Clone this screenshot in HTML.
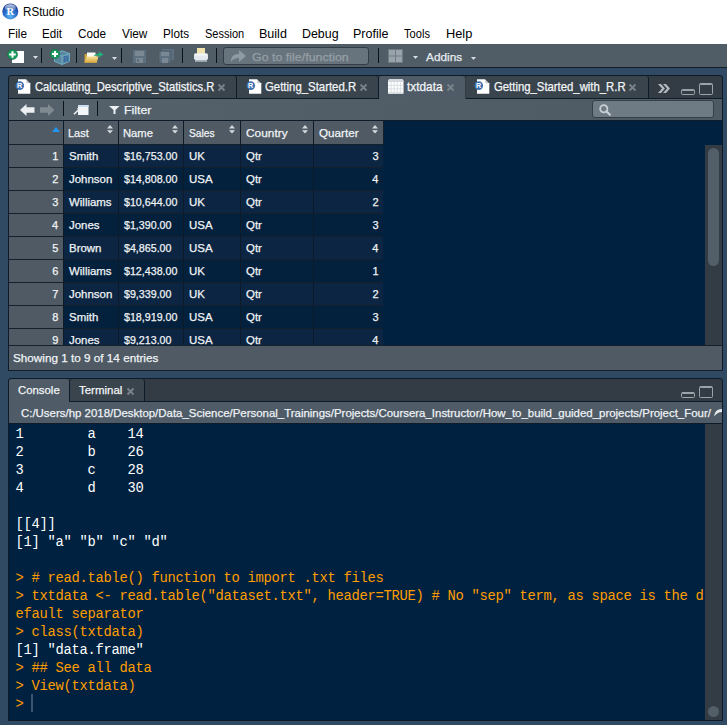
<!DOCTYPE html>
<html><head><meta charset="utf-8"><style>
html,body{margin:0;padding:0}
body{width:727px;height:725px;overflow:hidden;position:relative;background:#314a63;font-family:"Liberation Sans", sans-serif}
.r{position:absolute;box-sizing:border-box}
.t{position:absolute;white-space:pre;line-height:1;font-family:"Liberation Sans", sans-serif;-webkit-text-stroke:0.25px currentColor}
.m{position:absolute;white-space:pre;line-height:1;font-family:"Liberation Mono", monospace;font-size:13.8px;letter-spacing:-0.28px}
.clip{position:absolute;overflow:hidden}
svg.r{overflow:visible}
</style></head><body>
<div class="r" style="left:0px;top:0px;width:727px;height:44px;background:#ffffff;"></div><svg class="r" style="left:1.5px;top:2.5px" width="17" height="17" viewBox="0 0 17 17"><defs><radialGradient id="lg" cx="50%" cy="80%" r="70%"><stop offset="0" stop-color="#5fb6f0"/><stop offset="0.55" stop-color="#2b6fcf"/><stop offset="1" stop-color="#1b3f96"/></radialGradient><linearGradient id="hl" x1="0" y1="0" x2="0" y2="1"><stop offset="0" stop-color="#fff" stop-opacity="0.75"/><stop offset="1" stop-color="#fff" stop-opacity="0"/></linearGradient></defs><circle cx="8.3" cy="8.4" r="8" fill="url(#lg)"/><ellipse cx="8.3" cy="5" rx="5.5" ry="3.8" fill="url(#hl)"/><text x="8.4" y="11.6" text-anchor="middle" font-family="Liberation Serif" font-weight="bold" font-size="10.5" fill="#fff">R</text></svg><div class="t" style="left:22.67px;top:6px;font-size:12.5px;color:#000;transform:scaleX(0.9293);transform-origin:0 0;-webkit-text-stroke:0">RStudio</div><div class="t" style="left:7.66px;top:29px;font-size:11.9px;color:#000;transform:scaleX(0.9903);transform-origin:0 0;-webkit-text-stroke:0">File</div><div class="t" style="left:41.67px;top:29px;font-size:11.9px;color:#000;transform:scaleX(0.9765);transform-origin:0 0;-webkit-text-stroke:0">Edit</div><div class="t" style="left:78.11px;top:29px;font-size:11.9px;color:#000;transform:scaleX(0.9886);transform-origin:0 0;-webkit-text-stroke:0">Code</div><div class="t" style="left:121.74px;top:29px;font-size:11.9px;color:#000;transform:scaleX(0.9912);transform-origin:0 0;-webkit-text-stroke:0">View</div><div class="t" style="left:162.66px;top:29px;font-size:11.9px;color:#000;transform:scaleX(0.9877);transform-origin:0 0;-webkit-text-stroke:0">Plots</div><div class="t" style="left:204.90px;top:29px;font-size:11.9px;color:#000;transform:scaleX(0.9245);transform-origin:0 0;-webkit-text-stroke:0">Session</div><div class="t" style="left:259.30px;top:29px;font-size:11.9px;color:#000;transform:scaleX(1.0545);transform-origin:0 0;-webkit-text-stroke:0">Build</div><div class="t" style="left:302.01px;top:29px;font-size:11.9px;color:#000;transform:scaleX(1.0444);transform-origin:0 0;-webkit-text-stroke:0">Debug</div><div class="t" style="left:353.00px;top:29px;font-size:11.9px;color:#000;transform:scaleX(1.0543);transform-origin:0 0;-webkit-text-stroke:0">Profile</div><div class="t" style="left:404.22px;top:29px;font-size:11.9px;color:#000;transform:scaleX(0.9345);transform-origin:0 0;-webkit-text-stroke:0">Tools</div><div class="t" style="left:445.77px;top:29px;font-size:11.9px;color:#000;transform:scaleX(1.0770);transform-origin:0 0;-webkit-text-stroke:0">Help</div><div class="r" style="left:0px;top:44px;width:727px;height:23px;background:#505c66;"></div><div class="r" style="left:0px;top:67px;width:727px;height:1px;background:#131e28;"></div><div class="r" style="left:41px;top:48px;width:1px;height:15px;background:#0b1218;"></div><div class="r" style="left:76px;top:48px;width:1px;height:15px;background:#0b1218;"></div><div class="r" style="left:121px;top:48px;width:1px;height:15px;background:#0b1218;"></div><div class="r" style="left:182px;top:48px;width:1px;height:15px;background:#0b1218;"></div><div class="r" style="left:216px;top:48px;width:1px;height:15px;background:#0b1218;"></div><div class="r" style="left:378px;top:48px;width:1px;height:15px;background:#0b1218;"></div><div class="r" style="left:12px;top:51px;width:12px;height:12px;background:#ffffff;"></div><svg class="r" style="left:7px;top:49px" width="11" height="11" viewBox="0 0 11 11"><circle cx="5.5" cy="5.5" r="5" fill="#1a9a5c" stroke="#0f6a3f" stroke-width="0.6"/><path d="M5.5 2.2v6.6M2.2 5.5h6.6" stroke="#fff" stroke-width="2"/></svg><svg class="r" style="left:33px;top:56px" width="5" height="3" viewBox="0 0 5 3"><path d="M0 0h5L2.5 3z" fill="#d8dde2"/></svg><svg class="r" style="left:53.5px;top:50px" width="16" height="15" viewBox="0 0 16 15"><path d="M0.5 3.5L8 0.8 15.5 3.5V11.5L8 14.5 0.5 11.5z" fill="#5fa9c9" fill-opacity="0.55" stroke="#7cc0dc" stroke-width="0.7"/><path d="M0.5 3.5L8 6.2 15.5 3.5M8 6.2V14.5" stroke="#7cc0dc" stroke-width="0.7" fill="none"/><text x="9.2" y="11.8" font-family="Liberation Serif" font-size="9" fill="#2a5fb0">R</text></svg><svg class="r" style="left:50px;top:49px" width="10" height="10" viewBox="0 0 10 10"><circle cx="5" cy="5" r="4.7" fill="#1a9a5c" stroke="#0f6a3f" stroke-width="0.5"/><path d="M5 2v6M2 5h6" stroke="#fff" stroke-width="2"/></svg><svg class="r" style="left:84px;top:50.5px" width="21" height="12" viewBox="0 0 21 12"><defs><linearGradient id="fg" x1="0" y1="0" x2="0" y2="1"><stop offset="0" stop-color="#f6de97"/><stop offset="1" stop-color="#d6a93e"/></linearGradient></defs><path d="M0.5 3h4.5l1.2 1.2h6.8V11.5H0.5z" fill="#c99d35"/><path d="M3 1.5h8.5v6H3z" fill="#fbfbf6"/><path d="M0.3 11.7l2.2-6.2h12l-1.8 6.2z" fill="url(#fg)"/><path d="M9.3 5.3c1.3-1.8 3.2-2.6 5.5-2.6V0.6l4.7 2.9-4.7 2.9V4.4c-2.1 0-3.8 0.3-5.5 0.9z" fill="#23b07a"/></svg><svg class="r" style="left:112px;top:57px" width="5" height="3" viewBox="0 0 5 3"><path d="M0 0h5L2.5 3z" fill="#d8dde2"/></svg><svg class="r" style="left:133px;top:50px" width="13" height="13" viewBox="0 0 13 13"><rect x="0" y="0" width="13" height="13" fill="#5d7080"/><rect x="2" y="1" width="9" height="5" fill="#7a8893"/><rect x="3" y="8" width="7" height="5" fill="#7a8893"/><rect x="4" y="9" width="2" height="3" fill="#5d7080"/></svg><svg class="r" style="left:159px;top:49px" width="15" height="14" viewBox="0 0 15 14"><rect x="3" y="0" width="12" height="11" fill="#5d7080"/><rect x="0" y="2" width="12" height="12" fill="#5d7080" stroke="#4f5b66" stroke-width="0.8"/><rect x="2" y="3" width="8" height="4" fill="#7a8893"/><rect x="3" y="9" width="6" height="5" fill="#7a8893"/></svg><svg class="r" style="left:194px;top:48px" width="14" height="14" viewBox="0 0 14 14"><rect x="3" y="0" width="8" height="6.5" fill="#f0e2ad"/><rect x="0" y="5.6" width="14" height="6.4" rx="1.8" fill="#e3e8ee"/><rect x="0.5" y="5.6" width="13" height="2" fill="#f3f6f9"/><rect x="1" y="12" width="12" height="1.8" fill="#a9b3bb"/></svg><div class="r" style="left:223px;top:47px;width:146px;height:18px;background:#68747d;border:1px solid #313c46;border-radius:3px"></div><svg class="r" style="left:230.5px;top:50.3px" width="15" height="12" viewBox="0 0 15 12"><path d="M0 12c0-6 3-8 8-8V0l7 6-7 6V8c-4 0-6 1-8 4z" fill="#8f9aa2"/></svg><div class="t" style="left:251.78px;top:52px;font-size:11.2px;color:#959fa6;transform:scaleX(1.1113);transform-origin:0 0;">Go to file/function</div><svg class="r" style="left:388px;top:49px" width="15" height="14" viewBox="0 0 15 14"><rect x="0" y="0" width="15" height="14" fill="#6f7b84"/><rect x="1" y="1" width="6" height="5.5" fill="#9aa4ab"/><rect x="8" y="1" width="6" height="5.5" fill="#9aa4ab"/><rect x="1" y="7.5" width="6" height="5.5" fill="#9aa4ab"/><rect x="8" y="7.5" width="6" height="5.5" fill="#9aa4ab"/></svg><svg class="r" style="left:413px;top:56px" width="5" height="3" viewBox="0 0 5 3"><path d="M0 0h5L2.5 3z" fill="#d8dde2"/></svg><div class="t" style="left:425.94px;top:52px;font-size:11.5px;color:#e6ebef;transform:scaleX(1.0279);transform-origin:0 0;">Addins</div><svg class="r" style="left:471px;top:57px" width="5" height="3" viewBox="0 0 5 3"><path d="M0 0h5L2.5 3z" fill="#d8dde2"/></svg><div class="r" style="left:8px;top:75px;width:715px;height:296px;background:#333c45;border:1px solid #0d1b2a;border-radius:3px 3px 0 0"></div><div class="r" style="left:9px;top:76px;width:228px;height:23px;background:#3a444d;border-right:1px solid #0d1b2a;border-bottom:1px solid #0d1b2a;border-radius:3px 3px 0 0"></div><svg class="r" style="left:15.4px;top:79px" width="16" height="15" viewBox="0 0 16 15"><path d="M3 0.2H11.3L15.3 4.2V14.8H3z" fill="#fff"/><path d="M11.3 0.2V4.2H15.3z" fill="#c8ccd0"/><path d="M11.3 0.2L15.3 4.2" stroke="#2a3138" stroke-width="0.6"/><circle cx="4.8" cy="6.6" r="4.3" fill="#3d6fb3"/><text x="4.6" y="9.3" text-anchor="middle" font-family="Liberation Sans" font-weight="bold" font-size="7.2" fill="#fff">R</text></svg><div class="t" style="left:34.84px;top:82px;font-size:11.9px;color:#f2f5f7;transform:scaleX(0.9423);transform-origin:0 0;">Calculating_Descriptive_Statistics.R</div><svg class="r" style="left:218px;top:84px" width="7" height="7" viewBox="0 0 7 7"><path d="M0.5 0.5l6 6M6.5 0.5l-6 6" stroke="#78828a" stroke-width="1.9"/></svg><div class="r" style="left:237px;top:76px;width:142px;height:23px;background:#3a444d;border-right:1px solid #0d1b2a;border-bottom:1px solid #0d1b2a;border-radius:3px 3px 0 0"></div><svg class="r" style="left:245.8px;top:79px" width="16" height="15" viewBox="0 0 16 15"><path d="M3 0.2H11.3L15.3 4.2V14.8H3z" fill="#fff"/><path d="M11.3 0.2V4.2H15.3z" fill="#c8ccd0"/><path d="M11.3 0.2L15.3 4.2" stroke="#2a3138" stroke-width="0.6"/><circle cx="4.8" cy="6.6" r="4.3" fill="#3d6fb3"/><text x="4.6" y="9.3" text-anchor="middle" font-family="Liberation Sans" font-weight="bold" font-size="7.2" fill="#fff">R</text></svg><div class="t" style="left:265.23px;top:82px;font-size:11.9px;color:#f2f5f7;transform:scaleX(0.9578);transform-origin:0 0;">Getting_Started.R</div><svg class="r" style="left:360px;top:84px" width="7" height="7" viewBox="0 0 7 7"><path d="M0.5 0.5l6 6M6.5 0.5l-6 6" stroke="#78828a" stroke-width="1.9"/></svg><div class="r" style="left:379px;top:76px;width:86px;height:23px;background:#4f5b66;border-radius:3px 3px 0 0"></div><svg class="r" style="left:388.3px;top:79.3px" width="16" height="15" viewBox="0 0 16 15"><path d="M0 2.5Q0 0 2.5 0H13Q15.5 0 15.5 2.5V14.7H0z" fill="#fff"/><path d="M0 2.5Q0 0 2.5 0H13Q15.5 0 15.5 2.5V3H0z" fill="#d3d9df"/><path d="M0 6.4h15.5M0 9.9h15.5M0 13.3h15.5M3.1 3v11.7M6.2 3v11.7M9.3 3v11.7M12.4 3v11.7" stroke="#d5dbe0" stroke-width="0.9"/></svg><div class="t" style="left:407.12px;top:82px;font-size:11.9px;color:#f2f5f7;transform:scaleX(0.9966);transform-origin:0 0;">txtdata</div><svg class="r" style="left:447px;top:84px" width="7" height="7" viewBox="0 0 7 7"><path d="M0.5 0.5l6 6M6.5 0.5l-6 6" stroke="#78828a" stroke-width="1.9"/></svg><div class="r" style="left:466px;top:76px;width:183px;height:23px;background:#3a444d;border-right:1px solid #0d1b2a;border-bottom:1px solid #0d1b2a;border-radius:3px 3px 0 0"></div><svg class="r" style="left:474.4px;top:79px" width="16" height="15" viewBox="0 0 16 15"><path d="M3 0.2H11.3L15.3 4.2V14.8H3z" fill="#fff"/><path d="M11.3 0.2V4.2H15.3z" fill="#c8ccd0"/><path d="M11.3 0.2L15.3 4.2" stroke="#2a3138" stroke-width="0.6"/><circle cx="4.8" cy="6.6" r="4.3" fill="#3d6fb3"/><text x="4.6" y="9.3" text-anchor="middle" font-family="Liberation Sans" font-weight="bold" font-size="7.2" fill="#fff">R</text></svg><div class="t" style="left:493.83px;top:82px;font-size:11.9px;color:#f2f5f7;transform:scaleX(0.9527);transform-origin:0 0;">Getting_Started_with_R.R</div><svg class="r" style="left:629px;top:84px" width="7" height="7" viewBox="0 0 7 7"><path d="M0.5 0.5l6 6M6.5 0.5l-6 6" stroke="#78828a" stroke-width="1.9"/></svg><div class="r" style="left:649px;top:98px;width:73px;height:1px;background:#0d1b2a;"></div><svg class="r" style="left:658px;top:84px" width="12" height="9" viewBox="0 0 12 9"><path d="M0 0h3l4 4.5-4 4.5H0l4-4.5zM5 0h3l4 4.5-4 4.5H5l4-4.5z" fill="#b3b9be"/></svg><svg class="r" style="left:681px;top:83px" width="33" height="12" viewBox="0 0 33 12"><rect x="0.5" y="6.5" width="13" height="5" rx="1" fill="none" stroke="#9aa3aa" stroke-width="1"/><rect x="1" y="6" width="12" height="2" rx="1" fill="#9aa3aa"/><rect x="18.5" y="0.5" width="13" height="11" rx="1" fill="none" stroke="#9aa3aa" stroke-width="1"/><rect x="19" y="0" width="12" height="2" rx="1" fill="#9aa3aa"/></svg><div class="r" style="left:9px;top:99px;width:713px;height:21px;background:#4f5b66;background:linear-gradient(90deg,#55616b,#4d5963)"></div><div class="r" style="left:9px;top:120px;width:713px;height:1px;background:#0d1b2a;"></div><svg class="r" style="left:20px;top:104px" width="15" height="12" viewBox="0 0 15 12"><path d="M0 6L6.5 0V3.2H14.5V8.8H6.5V12z" fill="#eceff1"/></svg><svg class="r" style="left:40px;top:104px" width="15" height="12" viewBox="0 0 15 12"><path d="M14.5 6L8 0V3.2H0V8.8H8V12z" fill="#7f8990"/></svg><div class="r" style="left:63px;top:101px;width:1px;height:15px;background:#0b1218;"></div><svg class="r" style="left:73px;top:105px" width="16" height="10" viewBox="0 0 16 10"><rect x="5" y="0" width="10.5" height="10" fill="#f3f6f9"/><rect x="5" y="0" width="10.5" height="2" fill="#c9def2"/><path d="M1 9.3L6.5 3.8" stroke="#eef1f4" stroke-width="1.6"/><path d="M3.8 3H7.5V6.7z" fill="#eef1f4"/></svg><div class="r" style="left:97px;top:101px;width:1px;height:15px;background:#0b1218;"></div><svg class="r" style="left:109px;top:106px" width="11" height="8" viewBox="0 0 11 8"><path d="M0 0h10.5L6.5 4V8h-2V4z" fill="#eef1f3"/></svg><div class="t" style="left:124.01px;top:104px;font-size:11.7px;color:#eef2f5;transform:scaleX(1.0578);transform-origin:0 0;">Filter</div><div class="r" style="left:592px;top:100px;width:122px;height:18px;background:#6e7b84;border:1px solid #353f48;border-radius:3px"></div><svg class="r" style="left:599px;top:104px" width="13" height="12" viewBox="0 0 13 12"><circle cx="4.8" cy="4.8" r="3.6" stroke="#c8cfd4" stroke-width="1.8" fill="none"/><path d="M7.5 7.5l4 3.8" stroke="#c8cfd4" stroke-width="2.2"/></svg><div class="r" style="left:9px;top:121px;width:713px;height:224px;background:#002240;"></div><div class="r" style="left:9px;top:121px;width:374px;height:23px;background:#4f5a64;"></div><div class="r" style="left:9px;top:144px;width:374px;height:1px;background:#14202b;"></div><div class="r" style="left:383px;top:121px;width:1px;height:24px;background:#14202b;"></div><svg class="r" style="left:52px;top:127px" width="8" height="5" viewBox="0 0 8 5"><path d="M0 5L4 0l4 5z" fill="#2196f3"/></svg><div class="t" style="left:68.32px;top:128px;font-size:11.5px;color:#f0f3f5;transform:scaleX(0.9565);transform-origin:0 0;">Last</div><svg class="r" style="left:107.2px;top:124.6px" width="6" height="9" viewBox="0 0 6 9"><path d="M0 3.4L3 0l3 3.4zM0 5.2L3 8.6l3-3.4z" fill="#d6dbdf"/></svg><div class="t" style="left:123.40px;top:128px;font-size:11.5px;color:#f0f3f5;transform:scaleX(0.9757);transform-origin:0 0;">Name</div><svg class="r" style="left:172.2px;top:124.6px" width="6" height="9" viewBox="0 0 6 9"><path d="M0 3.4L3 0l3 3.4zM0 5.2L3 8.6l3-3.4z" fill="#d6dbdf"/></svg><div class="t" style="left:189.04px;top:128px;font-size:11.5px;color:#f0f3f5;transform:scaleX(0.8911);transform-origin:0 0;">Sales</div><svg class="r" style="left:229.2px;top:124.6px" width="6" height="9" viewBox="0 0 6 9"><path d="M0 3.4L3 0l3 3.4zM0 5.2L3 8.6l3-3.4z" fill="#d6dbdf"/></svg><div class="t" style="left:246.11px;top:128px;font-size:11.5px;color:#f0f3f5;transform:scaleX(1.0324);transform-origin:0 0;">Country</div><svg class="r" style="left:302.2px;top:124.6px" width="6" height="9" viewBox="0 0 6 9"><path d="M0 3.4L3 0l3 3.4zM0 5.2L3 8.6l3-3.4z" fill="#d6dbdf"/></svg><div class="t" style="left:318.77px;top:128px;font-size:11.5px;color:#f0f3f5;transform:scaleX(1.0147);transform-origin:0 0;">Quarter</div><svg class="r" style="left:372.2px;top:124.6px" width="6" height="9" viewBox="0 0 6 9"><path d="M0 3.4L3 0l3 3.4zM0 5.2L3 8.6l3-3.4z" fill="#d6dbdf"/></svg><div class="r" style="left:9px;top:145px;width:54px;height:22px;background:#4f5a64;"></div><div class="r" style="left:64px;top:145px;width:319px;height:22px;background:#0b2542;"></div><div class="r" style="left:9px;top:167px;width:374px;height:1px;background:#14202b;"></div><div class="clip" style="left:9px;top:145px;width:374px;height:22px"><div class="t" style="left:43.34px;top:6px;font-size:11px;color:#f0f3f5;transform:scaleX(1.0000);transform-origin:0 0;">1</div><div class="t" style="left:59.99px;top:6px;font-size:11px;color:#f0f3f5;transform:scaleX(1.0400);transform-origin:0 0;">Smith</div><div class="t" style="left:115.39px;top:6px;font-size:11px;color:#f0f3f5;transform:scaleX(0.9700);transform-origin:0 0;">$16,753.00</div><div class="t" style="left:179.64px;top:6px;font-size:11px;color:#f0f3f5;transform:scaleX(1.0400);transform-origin:0 0;">UK</div><div class="t" style="left:236.99px;top:6px;font-size:11px;color:#f0f3f5;transform:scaleX(1.0400);transform-origin:0 0;">Qtr</div><div class="t" style="left:363.39px;top:6px;font-size:11px;color:#f0f3f5;transform:scaleX(1.0000);transform-origin:0 0;">3</div></div><div class="r" style="left:9px;top:168px;width:54px;height:22px;background:#4f5a64;"></div><div class="r" style="left:64px;top:168px;width:319px;height:22px;background:#03203d;"></div><div class="r" style="left:9px;top:190px;width:374px;height:1px;background:#14202b;"></div><div class="clip" style="left:9px;top:168px;width:374px;height:22px"><div class="t" style="left:43.34px;top:6px;font-size:11px;color:#f0f3f5;transform:scaleX(1.0000);transform-origin:0 0;">2</div><div class="t" style="left:60.33px;top:6px;font-size:11px;color:#f0f3f5;transform:scaleX(1.0400);transform-origin:0 0;">Johnson</div><div class="t" style="left:115.39px;top:6px;font-size:11px;color:#f0f3f5;transform:scaleX(0.9700);transform-origin:0 0;">$14,808.00</div><div class="t" style="left:179.64px;top:6px;font-size:11px;color:#f0f3f5;transform:scaleX(1.0400);transform-origin:0 0;">USA</div><div class="t" style="left:236.99px;top:6px;font-size:11px;color:#f0f3f5;transform:scaleX(1.0400);transform-origin:0 0;">Qtr</div><div class="t" style="left:363.23px;top:6px;font-size:11px;color:#f0f3f5;transform:scaleX(1.0000);transform-origin:0 0;">4</div></div><div class="r" style="left:9px;top:191px;width:54px;height:22px;background:#4f5a64;"></div><div class="r" style="left:64px;top:191px;width:319px;height:22px;background:#0b2542;"></div><div class="r" style="left:9px;top:213px;width:374px;height:1px;background:#14202b;"></div><div class="clip" style="left:9px;top:191px;width:374px;height:22px"><div class="t" style="left:43.29px;top:6px;font-size:11px;color:#f0f3f5;transform:scaleX(1.0000);transform-origin:0 0;">3</div><div class="t" style="left:60.44px;top:6px;font-size:11px;color:#f0f3f5;transform:scaleX(1.0400);transform-origin:0 0;">Williams</div><div class="t" style="left:115.39px;top:6px;font-size:11px;color:#f0f3f5;transform:scaleX(0.9700);transform-origin:0 0;">$10,644.00</div><div class="t" style="left:179.64px;top:6px;font-size:11px;color:#f0f3f5;transform:scaleX(1.0400);transform-origin:0 0;">UK</div><div class="t" style="left:236.99px;top:6px;font-size:11px;color:#f0f3f5;transform:scaleX(1.0400);transform-origin:0 0;">Qtr</div><div class="t" style="left:363.44px;top:6px;font-size:11px;color:#f0f3f5;transform:scaleX(1.0000);transform-origin:0 0;">2</div></div><div class="r" style="left:9px;top:214px;width:54px;height:22px;background:#4f5a64;"></div><div class="r" style="left:64px;top:214px;width:319px;height:22px;background:#03203d;"></div><div class="r" style="left:9px;top:236px;width:374px;height:1px;background:#14202b;"></div><div class="clip" style="left:9px;top:214px;width:374px;height:22px"><div class="t" style="left:43.12px;top:6px;font-size:11px;color:#f0f3f5;transform:scaleX(1.0000);transform-origin:0 0;">4</div><div class="t" style="left:60.33px;top:6px;font-size:11px;color:#f0f3f5;transform:scaleX(1.0400);transform-origin:0 0;">Jones</div><div class="t" style="left:115.39px;top:6px;font-size:11px;color:#f0f3f5;transform:scaleX(0.9700);transform-origin:0 0;">$1,390.00</div><div class="t" style="left:179.64px;top:6px;font-size:11px;color:#f0f3f5;transform:scaleX(1.0400);transform-origin:0 0;">USA</div><div class="t" style="left:236.99px;top:6px;font-size:11px;color:#f0f3f5;transform:scaleX(1.0400);transform-origin:0 0;">Qtr</div><div class="t" style="left:363.39px;top:6px;font-size:11px;color:#f0f3f5;transform:scaleX(1.0000);transform-origin:0 0;">3</div></div><div class="r" style="left:9px;top:237px;width:54px;height:22px;background:#4f5a64;"></div><div class="r" style="left:64px;top:237px;width:319px;height:22px;background:#0b2542;"></div><div class="r" style="left:9px;top:259px;width:374px;height:1px;background:#14202b;"></div><div class="clip" style="left:9px;top:237px;width:374px;height:22px"><div class="t" style="left:43.23px;top:6px;font-size:11px;color:#f0f3f5;transform:scaleX(1.0000);transform-origin:0 0;">5</div><div class="t" style="left:59.58px;top:6px;font-size:11px;color:#f0f3f5;transform:scaleX(1.0400);transform-origin:0 0;">Brown</div><div class="t" style="left:115.39px;top:6px;font-size:11px;color:#f0f3f5;transform:scaleX(0.9700);transform-origin:0 0;">$4,865.00</div><div class="t" style="left:179.64px;top:6px;font-size:11px;color:#f0f3f5;transform:scaleX(1.0400);transform-origin:0 0;">USA</div><div class="t" style="left:236.99px;top:6px;font-size:11px;color:#f0f3f5;transform:scaleX(1.0400);transform-origin:0 0;">Qtr</div><div class="t" style="left:363.23px;top:6px;font-size:11px;color:#f0f3f5;transform:scaleX(1.0000);transform-origin:0 0;">4</div></div><div class="r" style="left:9px;top:260px;width:54px;height:22px;background:#4f5a64;"></div><div class="r" style="left:64px;top:260px;width:319px;height:22px;background:#03203d;"></div><div class="r" style="left:9px;top:282px;width:374px;height:1px;background:#14202b;"></div><div class="clip" style="left:9px;top:260px;width:374px;height:22px"><div class="t" style="left:43.29px;top:6px;font-size:11px;color:#f0f3f5;transform:scaleX(1.0000);transform-origin:0 0;">6</div><div class="t" style="left:60.44px;top:6px;font-size:11px;color:#f0f3f5;transform:scaleX(1.0400);transform-origin:0 0;">Williams</div><div class="t" style="left:115.39px;top:6px;font-size:11px;color:#f0f3f5;transform:scaleX(0.9700);transform-origin:0 0;">$12,438.00</div><div class="t" style="left:179.64px;top:6px;font-size:11px;color:#f0f3f5;transform:scaleX(1.0400);transform-origin:0 0;">UK</div><div class="t" style="left:236.99px;top:6px;font-size:11px;color:#f0f3f5;transform:scaleX(1.0400);transform-origin:0 0;">Qtr</div><div class="t" style="left:363.44px;top:6px;font-size:11px;color:#f0f3f5;transform:scaleX(1.0000);transform-origin:0 0;">1</div></div><div class="r" style="left:9px;top:283px;width:54px;height:22px;background:#4f5a64;"></div><div class="r" style="left:64px;top:283px;width:319px;height:22px;background:#0b2542;"></div><div class="r" style="left:9px;top:305px;width:374px;height:1px;background:#14202b;"></div><div class="clip" style="left:9px;top:283px;width:374px;height:22px"><div class="t" style="left:43.34px;top:6px;font-size:11px;color:#f0f3f5;transform:scaleX(1.0000);transform-origin:0 0;">7</div><div class="t" style="left:60.33px;top:6px;font-size:11px;color:#f0f3f5;transform:scaleX(1.0400);transform-origin:0 0;">Johnson</div><div class="t" style="left:115.39px;top:6px;font-size:11px;color:#f0f3f5;transform:scaleX(0.9700);transform-origin:0 0;">$9,339.00</div><div class="t" style="left:179.64px;top:6px;font-size:11px;color:#f0f3f5;transform:scaleX(1.0400);transform-origin:0 0;">UK</div><div class="t" style="left:236.99px;top:6px;font-size:11px;color:#f0f3f5;transform:scaleX(1.0400);transform-origin:0 0;">Qtr</div><div class="t" style="left:363.44px;top:6px;font-size:11px;color:#f0f3f5;transform:scaleX(1.0000);transform-origin:0 0;">2</div></div><div class="r" style="left:9px;top:306px;width:54px;height:22px;background:#4f5a64;"></div><div class="r" style="left:64px;top:306px;width:319px;height:22px;background:#03203d;"></div><div class="r" style="left:9px;top:328px;width:374px;height:1px;background:#14202b;"></div><div class="clip" style="left:9px;top:306px;width:374px;height:22px"><div class="t" style="left:43.23px;top:6px;font-size:11px;color:#f0f3f5;transform:scaleX(1.0000);transform-origin:0 0;">8</div><div class="t" style="left:59.99px;top:6px;font-size:11px;color:#f0f3f5;transform:scaleX(1.0400);transform-origin:0 0;">Smith</div><div class="t" style="left:115.39px;top:6px;font-size:11px;color:#f0f3f5;transform:scaleX(0.9700);transform-origin:0 0;">$18,919.00</div><div class="t" style="left:179.64px;top:6px;font-size:11px;color:#f0f3f5;transform:scaleX(1.0400);transform-origin:0 0;">USA</div><div class="t" style="left:236.99px;top:6px;font-size:11px;color:#f0f3f5;transform:scaleX(1.0400);transform-origin:0 0;">Qtr</div><div class="t" style="left:363.39px;top:6px;font-size:11px;color:#f0f3f5;transform:scaleX(1.0000);transform-origin:0 0;">3</div></div><div class="r" style="left:9px;top:329px;width:54px;height:16px;background:#4f5a64;"></div><div class="r" style="left:64px;top:329px;width:319px;height:16px;background:#0b2542;"></div><div class="clip" style="left:9px;top:329px;width:374px;height:16px"><div class="t" style="left:43.29px;top:6px;font-size:11px;color:#f0f3f5;transform:scaleX(1.0000);transform-origin:0 0;">9</div><div class="t" style="left:60.33px;top:6px;font-size:11px;color:#f0f3f5;transform:scaleX(1.0400);transform-origin:0 0;">Jones</div><div class="t" style="left:115.39px;top:6px;font-size:11px;color:#f0f3f5;transform:scaleX(0.9700);transform-origin:0 0;">$9,213.00</div><div class="t" style="left:179.64px;top:6px;font-size:11px;color:#f0f3f5;transform:scaleX(1.0400);transform-origin:0 0;">USA</div><div class="t" style="left:236.99px;top:6px;font-size:11px;color:#f0f3f5;transform:scaleX(1.0400);transform-origin:0 0;">Qtr</div><div class="t" style="left:363.23px;top:6px;font-size:11px;color:#f0f3f5;transform:scaleX(1.0000);transform-origin:0 0;">4</div></div><div class="r" style="left:63px;top:121px;width:1px;height:224px;background:#0d1b29;"></div><div class="r" style="left:118px;top:121px;width:1px;height:224px;background:#0d1b29;"></div><div class="r" style="left:183px;top:121px;width:1px;height:224px;background:#0d1b29;"></div><div class="r" style="left:240px;top:121px;width:1px;height:224px;background:#0d1b29;"></div><div class="r" style="left:313px;top:121px;width:1px;height:224px;background:#0d1b29;"></div><div class="r" style="left:705px;top:145px;width:17px;height:200px;background:#333c45;"></div><div class="r" style="left:708px;top:148px;width:11px;height:118px;background:#525e68;border-radius:6px"></div><div class="r" style="left:9px;top:345px;width:713px;height:1px;background:#14202b;"></div><div class="r" style="left:9px;top:346px;width:713px;height:24px;background:#4f5a64;"></div><div class="r" style="left:8px;top:370px;width:714px;height:1px;background:#14202b;"></div><div class="t" style="left:13.37px;top:352px;font-size:11.7px;color:#eef2f5;transform:scaleX(1.0029);transform-origin:0 0;">Showing 1 to 9 of 14 entries</div><div class="r" style="left:8px;top:378px;width:715px;height:343px;background:#333c45;border:1px solid #0d1b2a;border-radius:3px 3px 0 0"></div><div class="r" style="left:9px;top:379px;width:60px;height:23px;background:#4f5b66;border-radius:3px 3px 0 0"></div><div class="r" style="left:69px;top:379px;width:76px;height:23px;background:#3a444d;border-left:1px solid #0d1b2a;border-right:1px solid #0d1b2a;border-bottom:1px solid #0d1b2a;border-radius:3px 3px 0 0"></div><div class="r" style="left:145px;top:401px;width:577px;height:1px;background:#0d1b2a;"></div><div class="t" style="left:18.13px;top:384px;font-size:11.7px;color:#f2f5f7;transform:scaleX(0.9730);transform-origin:0 0;">Console</div><div class="t" style="left:78.91px;top:384px;font-size:11.7px;color:#f2f5f7;transform:scaleX(0.9811);transform-origin:0 0;">Terminal</div><svg class="r" style="left:127px;top:388px" width="7" height="7" viewBox="0 0 7 7"><path d="M0.5 0.5l6 6M6.5 0.5l-6 6" stroke="#78828a" stroke-width="1.9"/></svg><svg class="r" style="left:681px;top:386px" width="33" height="12" viewBox="0 0 33 12"><rect x="0.5" y="6.5" width="13" height="5" rx="1" fill="none" stroke="#9aa3aa" stroke-width="1"/><rect x="1" y="6" width="12" height="2" rx="1" fill="#9aa3aa"/><rect x="18.5" y="0.5" width="13" height="11" rx="1" fill="none" stroke="#9aa3aa" stroke-width="1"/><rect x="19" y="0" width="12" height="2" rx="1" fill="#9aa3aa"/></svg><div class="r" style="left:9px;top:402px;width:713px;height:21px;background:#4f5b66;"></div><div class="t" style="left:21.43px;top:408px;font-size:11.8px;color:#eef2f5;transform:scaleX(0.9694);transform-origin:0 0;">C:/Users/hp 2018/Desktop/Data_Science/Personal_Trainings/Projects/Coursera_Instructor/How_to_build_guided_projects/Project_Four/</div><div class="r" style="left:9px;top:423px;width:713px;height:1px;background:#0d1b2a;"></div><svg class="r" style="left:714px;top:408px;overflow:hidden" width="8" height="9" viewBox="0 0 8 9"><path d="M0.3 8.5C0.3 4 3 1 8 1V4C4.5 4 2.5 5.5 0.3 8.5z" fill="#e6eaed"/></svg><div class="r" style="left:9px;top:424px;width:713px;height:296px;background:#002240;"></div><div class="r" style="left:705px;top:424px;width:17px;height:296px;background:#333c45;"></div><div class="r" style="left:708px;top:706px;width:11px;height:11px;border-radius:50%;background:#525e68"></div><div class="m" style="left:15.5px;top:428px;color:#ffffff">1        a    14</div><div class="m" style="left:15.5px;top:446px;color:#ffffff">2        b    26</div><div class="m" style="left:15.5px;top:464px;color:#ffffff">3        c    28</div><div class="m" style="left:15.5px;top:482px;color:#ffffff">4        d    30</div><div class="m" style="left:15.5px;top:500px;color:#ffffff"></div><div class="m" style="left:15.5px;top:518px;color:#ffffff">[[4]]</div><div class="m" style="left:15.5px;top:536px;color:#ffffff">[1] &quot;a&quot; &quot;b&quot; &quot;c&quot; &quot;d&quot;</div><div class="m" style="left:15.5px;top:554px;color:#ffffff"></div><div class="m" style="left:15.5px;top:572px;color:#ff9d00">&gt; # read.table() function to import .txt files</div><div class="m" style="left:15.5px;top:590px;color:#ff9d00">&gt; txtdata &lt;- read.table(&quot;dataset.txt&quot;, header=TRUE) # No &quot;sep&quot; term, as space is the d</div><div class="m" style="left:15.5px;top:608px;color:#ff9d00">efault separator</div><div class="m" style="left:15.5px;top:626px;color:#ff9d00">&gt; class(txtdata)</div><div class="m" style="left:15.5px;top:644px;color:#ffffff">[1] &quot;data.frame&quot;</div><div class="m" style="left:15.5px;top:662px;color:#ff9d00">&gt; ## See all data</div><div class="m" style="left:15.5px;top:680px;color:#ff9d00">&gt; View(txtdata)</div><div class="m" style="left:15.5px;top:698px;color:#ff9d00">&gt; </div><div class="r" style="left:31px;top:694px;width:2px;height:18px;background:#3b5470;"></div>
</body></html>
